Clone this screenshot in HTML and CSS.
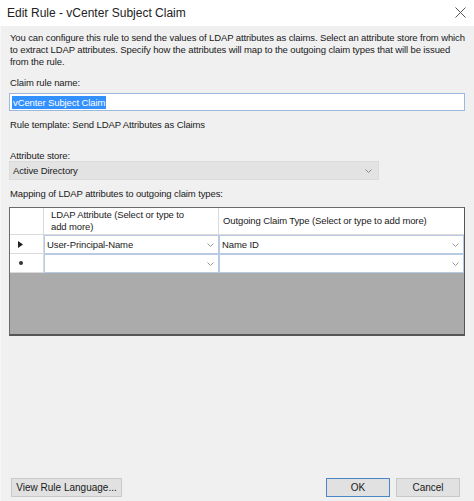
FILE: index.html
```html
<!DOCTYPE html>
<html>
<head>
<meta charset="utf-8">
<link rel="stylesheet" href="styles.css">
</head>
<body>
<div class="window">
  <div class="titlebar">
    <span class="title">Edit Rule - vCenter Subject Claim</span>
    <svg class="close" width="11" height="11" viewBox="0 0 11 11"><path d="M0.5 0.5 L10.5 10.5 M10.5 0.5 L0.5 10.5" stroke="#555" stroke-width="1" fill="none"/></svg>
  </div>
  <div class="content">
    <p class="desc">You can configure this rule to send the values of LDAP attributes as claims. Select an attribute store from which<br>to extract LDAP attributes. Specify how the attributes will map to the outgoing claim types that will be issued<br>from the rule.</p>
    <div class="label label-name">Claim rule name:</div>
    <div class="textbox"><span class="selected">vCenter Subject Claim</span></div>
    <div class="label label-template">Rule template: Send LDAP Attributes as Claims</div>
    <div class="label label-store">Attribute store:</div>
    <div class="select">
      <span>Active Directory</span>
      <svg class="chev" width="7" height="4" viewBox="0 0 7 4"><path d="M0.5 0.5 L3.5 3.5 L6.5 0.5" stroke="#888" fill="none"/></svg>
    </div>
    <div class="label label-map">Mapping of LDAP attributes to outgoing claim types:</div>
    <div class="grid">
      <div class="rows">
        <div class="hcell corner"></div>
        <div class="hcell">LDAP Attribute (Select or type to<br>add more)</div>
        <div class="hcell">Outgoing Claim Type (Select or type to add more)</div>

        <div class="rowhead"><svg width="5" height="7" viewBox="0 0 5 7"><path d="M0 0 L5 3.5 L0 7 Z" fill="#222"/></svg></div>
        <div class="cell combo"><span>User-Principal-Name</span><svg class="chev" width="7" height="4" viewBox="0 0 7 4"><path d="M0.5 0.5 L3.5 3.5 L6.5 0.5" stroke="#999" fill="none"/></svg></div>
        <div class="cell combo"><span>Name ID</span><svg class="chev" width="7" height="4" viewBox="0 0 7 4"><path d="M0.5 0.5 L3.5 3.5 L6.5 0.5" stroke="#999" fill="none"/></svg></div>

        <div class="rowhead"><span class="dot"></span></div>
        <div class="cell combo"><span></span><svg class="chev" width="7" height="4" viewBox="0 0 7 4"><path d="M0.5 0.5 L3.5 3.5 L6.5 0.5" stroke="#999" fill="none"/></svg></div>
        <div class="cell combo"><span></span><svg class="chev" width="7" height="4" viewBox="0 0 7 4"><path d="M0.5 0.5 L3.5 3.5 L6.5 0.5" stroke="#999" fill="none"/></svg></div>
      </div>
      <div class="empty"></div>
    </div>
    <div class="spacer"></div>
    <div class="buttons">
      <button class="btn btn-view">View Rule Language...</button>
      <div class="right">
        <button class="btn btn-ok">OK</button>
        <button class="btn btn-cancel">Cancel</button>
      </div>
    </div>
  </div>
</div>
</body>
</html>
```
FILE: styles.css
```css
html, body {
  margin: 0;
  padding: 0;
  background: #f0f0f0;
}
body {
  font-family: "Liberation Sans", Arial, sans-serif;
  font-size: 9.5px;
  letter-spacing: -0.11px;
  color: #1a1a1a;
}
.window {
  width: 474px;
  height: 501px;
  display: flex;
  flex-direction: column;
  overflow: hidden;
}
.titlebar {
  height: 26px;
  flex: none;
  background: #ffffff;
  display: flex;
  align-items: center;
  justify-content: space-between;
  padding: 0 8px 0 7px;
}
.title {
  font-size: 12px;
  letter-spacing: 0;
  color: #222;
}
.close {
  margin-top: -1px;
}
.content {
  flex: 1;
  display: flex;
  flex-direction: column;
  padding: 6px 9px 4px 8px;
  border-left: 1px solid #f7f7f7;
}
.desc {
  margin: 0 0 0 1px;
  line-height: 12px;
  white-space: nowrap;
}
.label {
  line-height: 12px;
  padding-left: 1px;
}
.label-name { margin-top: 9px; }
.textbox {
  margin-top: 4px;
  height: 16px;
  background: #fff;
  border: 1px solid #9cb8db;
  display: flex;
  align-items: center;
  padding-left: 2px;
}
.selected {
  background: #3390ff;
  color: #fff;
  line-height: 13px;
  padding: 0 1px;
}
.label-template { margin-top: 8px; }
.label-store { margin-top: 19px; }
.select {
  margin-top: -1px;
  width: 370px;
  height: 19px;
  box-sizing: border-box;
  background: #e3e3e3;
  border: 1px solid #dcdcdc;
  display: flex;
  align-items: center;
  justify-content: space-between;
  padding: 0 6px 0 3px;
}
.select .chev { margin-top: 1px; }
.label-map { margin-top: 8px; }
.grid {
  margin-top: 7px;
  border: 1px solid #6a6a6a;
  border-right-color: #555;
  border-bottom: 2px solid #555;
  display: flex;
  flex-direction: column;
}
.rows {
  display: grid;
  grid-template-columns: 34px 175px 1fr;
  grid-template-rows: 27px 19px 19px;
  background: #fff;
}
.hcell {
  border-right: 1px solid #dadada;
  border-bottom: 1px solid #dadada;
  padding-left: 7px;
  display: flex;
  align-items: center;
  line-height: 12px;
}
.hcell:nth-child(3) { padding-left: 4px; border-right: none; }
.corner { padding: 0; }
.rowhead {
  border-right: 1px solid #dadada;
  border-bottom: 1px solid #dadada;
  display: flex;
  align-items: center;
  padding-left: 8px;
}
.dot {
  display: block;
  width: 4px;
  height: 4px;
  border-radius: 50%;
  background: #333;
  margin-left: 1px;
}
.cell {
  background: #fff;
  border: 1px solid #b9cbe4;
  display: flex;
  align-items: center;
  justify-content: space-between;
  padding: 0 4px 0 2px;
}
.cell .chev { margin-top: 1px; }
.empty {
  height: 61px;
  background: #ababab;
}
.spacer { flex: 1; }
.buttons {
  display: flex;
  justify-content: space-between;
  align-items: flex-end;
  padding-left: 2px;
}
.right {
  display: flex;
  gap: 6px;
  margin-right: 5px;
}
.btn {
  font-family: "Liberation Sans", Arial, sans-serif;
  font-size: 10px;
  color: #1a1a1a;
  height: 19px;
  background: #e1e1e1;
  border: 1px solid #c9c9c9;
  padding: 0;
  margin: 0;
}
.btn-view { width: 111px; }
.btn-ok { width: 64px; border-color: #4a86c5; }
.btn-cancel { width: 64px; }
```
